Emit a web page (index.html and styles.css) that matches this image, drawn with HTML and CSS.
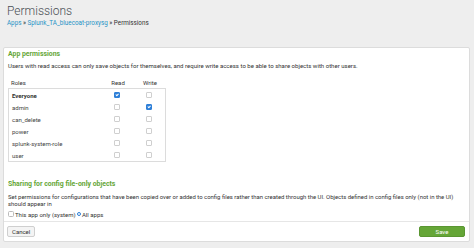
FILE: index.html
```html
<!DOCTYPE html>
<html>
<head>
<meta charset="utf-8">
<link rel="stylesheet" href="styles.css">
</head>
<body>
<div class="page">
  <header class="head">
    <h1 class="title">Permissions</h1>
    <div class="crumbs"><a class="link">Apps</a> » <a class="link">Splunk_TA_bluecoat-proxysg</a> » Permissions</div>
  </header>
  <section class="panel">
    <div class="body">
      <h2 class="sec-title">App permissions</h2>
      <p class="desc">Users with read access can only save objects for themselves, and require write access to be able to share objects with other users.</p>
      <div class="grid head-row">
        <div class="name">Roles</div>
        <div class="col">Read</div>
        <div class="col">Write</div>
      </div>
      <div class="table">
        <div class="grid row"><div class="name bold">Everyone</div><div class="col"><span class="cb on"></span></div><div class="col"><span class="cb"></span></div></div>
        <div class="grid row"><div class="name">admin</div><div class="col"><span class="cb"></span></div><div class="col"><span class="cb on"></span></div></div>
        <div class="grid row"><div class="name">can_delete</div><div class="col"><span class="cb"></span></div><div class="col"><span class="cb"></span></div></div>
        <div class="grid row"><div class="name">power</div><div class="col"><span class="cb"></span></div><div class="col"><span class="cb"></span></div></div>
        <div class="grid row"><div class="name">splunk-system-role</div><div class="col"><span class="cb"></span></div><div class="col"><span class="cb"></span></div></div>
        <div class="grid row"><div class="name">user</div><div class="col"><span class="cb"></span></div><div class="col"><span class="cb"></span></div></div>
      </div>
      <h2 class="sec-title sec2">Sharing for config file-only objects</h2>
      <p class="desc desc2">Set permissions for configurations that have been copied over or added to config files rather than created through the UI. Objects defined in config files only (not in the UI) should appear in</p>
      <div class="radios">
        <span class="radio"></span><span>This app only (system)</span><span class="radio on"></span><span>All apps</span>
      </div>
    </div>
    <footer class="foot">
      <button class="btn">Cancel</button>
      <button class="btn primary">Save</button>
    </footer>
  </section>
</div>
</body>
</html>
```
FILE: styles.css
```css
html, body {
  margin: 0;
  padding: 0;
  background: #eeeeee;
  font-family: Roboto, "Liberation Sans", sans-serif;
  color: #3c444d;
}
.page {
  width: 474px;
  height: 248px;
  overflow: hidden;
}
.head {
  padding: 3px 7px 0 7px;
  height: 44px;
  box-sizing: border-box;
}
.title {
  margin: 0;
  font-size: 12px;
  font-weight: 300;
  line-height: 16px;
  color: #4a4f55;
}
.crumbs {
  margin-top: 0;
  font-size: 6.3px;
  line-height: 8px;
  color: #333;
}
.link {
  color: #1e93c6;
}
.panel {
  margin: 3px 3px 0 3px;
  width: 467px;
  box-sizing: border-box;
  background: #fff;
  border: 1px solid #dcdcdc;
  border-radius: 2px;
}
.body {
  padding: 2px 3px 0 4px;
}
.sec-title {
  margin: 0;
  font-size: 6.9px;
  line-height: 8px;
  font-weight: 700;
  color: #65a637;
}
.desc {
  margin: 4px 0 0 0;
  font-size: 6.05px;
  line-height: 8px;
  color: #333;
}
.grid {
  display: grid;
  grid-template-columns: 1fr 32px 32px;
  width: 158px;
  align-items: center;
}
.head-row {
  margin-top: 8px;
  height: 8px;
  font-size: 6px;
  color: #333;
}
.table {
  width: 158px;
  box-sizing: border-box;
  border: 1px solid #dcdcdc;
  margin-top: 2px;
}
.table .grid {
  width: 156px;
}
.row {
  height: 12px;
  font-size: 6px;
  color: #444;
}
.name {
  padding-left: 3px;
}
.bold {
  font-weight: 700;
  color: #333;
}
.col {
  text-align: center;
  display: flex;
  justify-content: center;
  align-items: center;
}
.cb {
  display: block;
  width: 4px;
  height: 4px;
  border: 0.6px solid #cfcfcf;
  border-radius: 1px;
  background: #fff;
  position: relative;
}
.cb.on {
  background: #2f80d8;
  border-color: #2f80d8;
}
.cb.on::after {
  content: "";
  position: absolute;
  left: 1.3px;
  top: 0.2px;
  width: 1.2px;
  height: 2.4px;
  border: solid #fff;
  border-width: 0 0.7px 0.7px 0;
  transform: rotate(45deg);
}
.sec2 {
  margin-top: 18px;
}
.desc2 {
  margin-top: 5px;
  line-height: 7px;
  font-size: 5.95px;
}
.radios {
  margin-top: 3px;
  height: 8px;
  display: flex;
  align-items: center;
  font-size: 6px;
  color: #333;
}
.radio {
  display: block;
  width: 4px;
  height: 4px;
  border: 0.6px solid #bbb;
  border-radius: 1.5px;
  margin-right: 1px;
  background: #fff;
}
.radio.on {
  margin-left: 1px;
  width: 2.4px;
  height: 2.4px;
  border: 1.6px solid #2f80d8;
  border-radius: 50%;
  background: #fff;
}
.foot {
  margin-top: 3px;
  border-top: 1px solid #e6e6e6;
  padding: 4px 4px 4px 3px;
  display: flex;
  justify-content: space-between;
  align-items: center;
}
.btn {
  font-family: Roboto, "Liberation Sans", sans-serif;
  font-size: 6px;
  height: 11px;
  line-height: 9px;
  padding: 0 4px;
  border: 1px solid #cfcfcf;
  border-radius: 2px;
  background: #f4f4f4;
  color: #333;
}
.btn.primary {
  width: 46px;
  background: #65a637;
  border-color: #5a9632;
  color: #fff;
}
```
